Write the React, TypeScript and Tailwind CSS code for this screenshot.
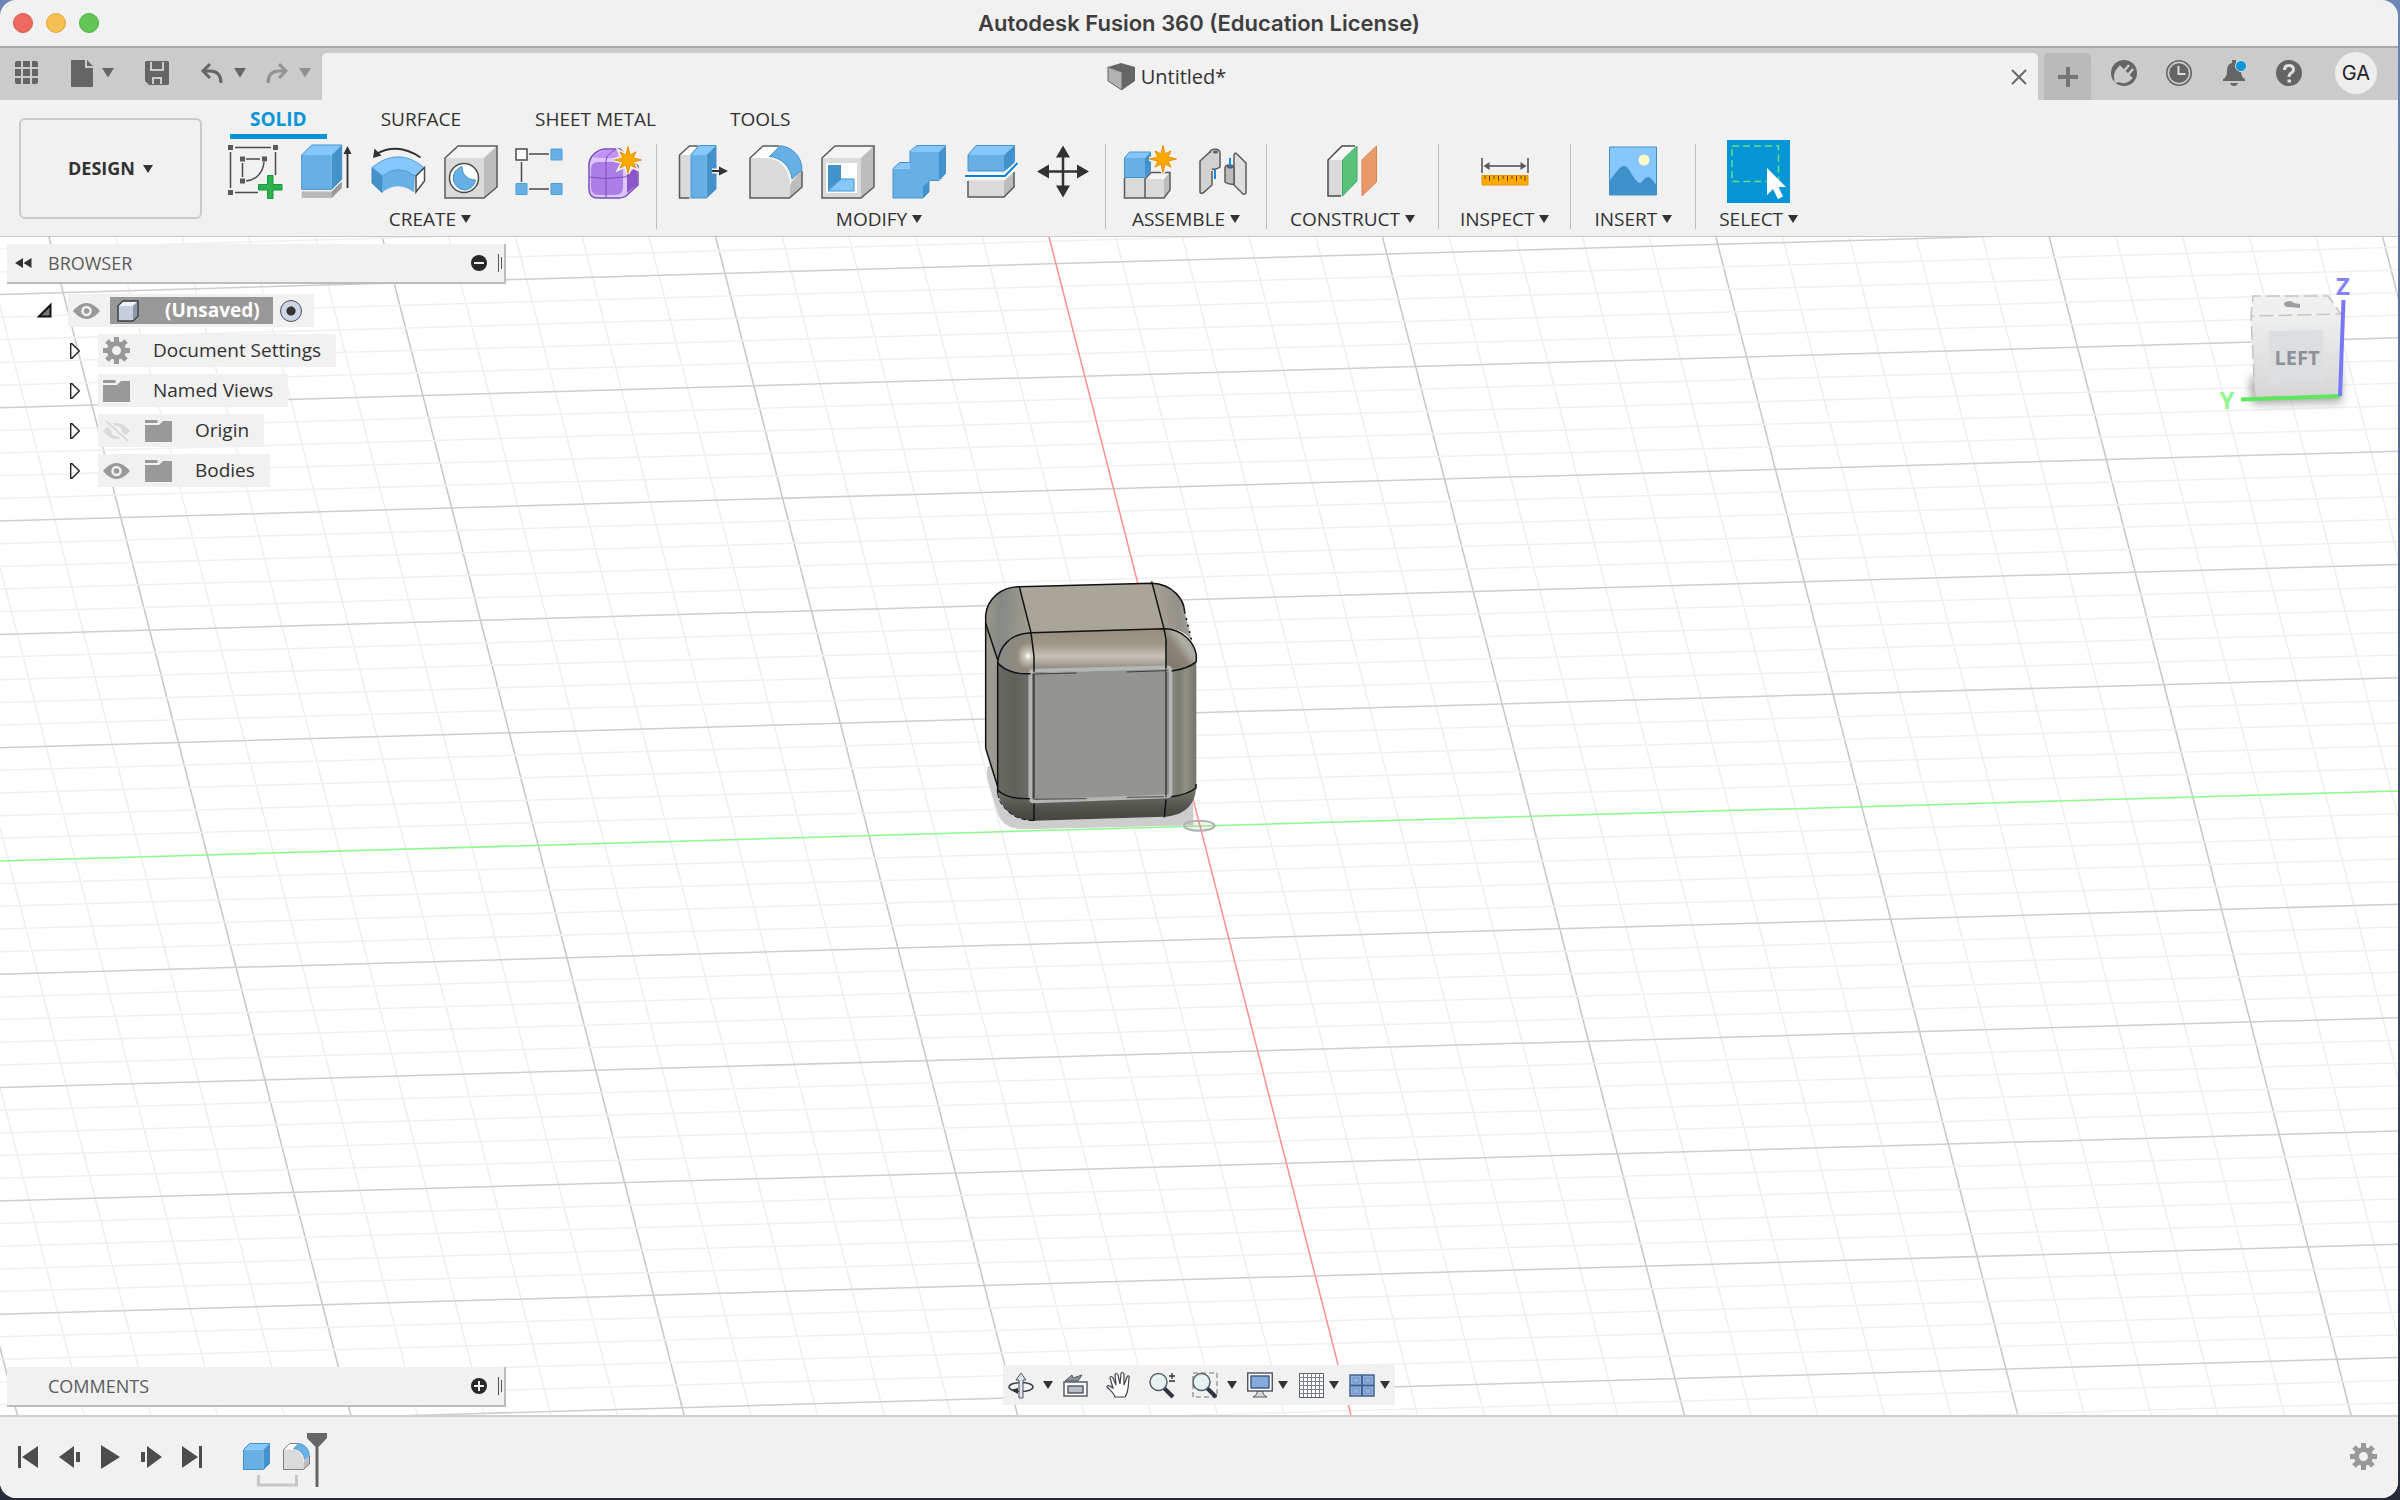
import type { ReactNode } from "react";
import clsx from "clsx";

const ribbonTabs = ["SOLID", "SURFACE", "SHEET METAL", "TOOLS"];

function Caret({ className = "w-[10px] text-[#323232]" }: { className?: string }) {
  return (
    <svg viewBox="0 0 10 8" className={clsx("shrink-0 fill-current", className)} aria-hidden="true">
      <path d="M0 0h10L5 8z" />
    </svg>
  );
}

function Icon({ w = 54, h = 54, className, children }: { w?: number; h?: number; className?: string; children: ReactNode }) {
  return (
    <svg width={w} height={h} viewBox={`0 0 ${w} ${h}`} fill="none" className={clsx("shrink-0 overflow-visible", className)} aria-hidden="true">
      {children}
    </svg>
  );
}

function Star({ x, y }: { x: number; y: number }) {
  const points = Array.from({ length: 16 }, (_, i) => {
    const r = i % 2 ? 5.5 : i % 4 ? 11.5 : 13.5;
    const a = (i * Math.PI) / 8 - Math.PI / 2;
    return `${(x + r * Math.cos(a)).toFixed(1)},${(y + r * Math.sin(a)).toFixed(1)}`;
  }).join(" ");
  return (
    <>
      <polygon points={points} stroke="#f2f2f2" strokeWidth="4" />
      <polygon points={points} fill="#ffa800" stroke="#e69200" />
    </>
  );
}

/* Ribbon icons */

function SketchIcon() {
  return (
    <Icon>
      <path d="M7 2.5h36M2.5 7v36M47.5 7v23M7 47.5h23M18 14h14M14.5 18v14M36 17C35 28 28 35 18 36" stroke="#4b4b4b" strokeWidth="1.5" />
      <path d="M0 0h5v5H0zM45 0h5v5h-5zM0 45h5v5H0zM12 11.5h5v5h-5zM34 11.5h5v5h-5zM12 33.5h5v5h-5z" fill="#5a5a5a" />
      <path d="M39.5 30.5h5.5v9h9v5.5h-9v8.500h-5.500v-8.500h-9v-5.500h9z" fill="#2bb24f" stroke="#149a3b" />
    </Icon>
  );
}

function ExtrudeIcon() {
  return (
    <Icon>
      <path d="M1.7 46.5h30l10-10v6.5l-10 10h-30z" fill="#b9b9b9" />
      <path d="M31.7 46.5l10-10v6.5l-10 10z" fill="#9a9a9a" />
      <path d="M1.7 10h30v34.3h-30z" fill="#67b0e6" />
      <path d="M1.7 10l10-10h30l-10 10z" fill="#86c8fb" />
      <path d="M31.7 10l10-10v34.3l-10 10z" fill="#4492cb" />
      <path d="M1.7 10l10-10h30v34.3l-10 10h-30z" stroke="#4492cb" />
      <path d="M47.5 43V5" stroke="#323232" strokeWidth="1.8" />
      <path d="M47.5 1l4 8h-8z" fill="#323232" />
    </Icon>
  );
}

function RevolveIcon() {
  return (
    <Icon>
      <path d="M0 22.5L10.5 31 10 47.5 0 38z" fill="#4492cb" stroke="#3b88c2" />
      <path d="M10.5 31Q26 18 43 31L42 47.5Q26 35 10 47.5z" fill="#67b0e6" />
      <path d="M0 22.5Q26 1 52 22.5L43 31Q26 18 10.5 31z" fill="#86c8fb" stroke="#4fa0dc" />
      <path d="M44 31l8.5-8.500V36L44 47z" fill="#fff" stroke="#4b4b4b" strokeWidth="1.5" />
      <path d="M4 9Q26-3 48.5 12.5" stroke="#323232" strokeWidth="1.8" />
      <path d="M1 13l1.500-9.500 7 7z" fill="#323232" />
    </Icon>
  );
}

function BoxShell() {
  return (
    <>
      <path d="M1 13L14 1h39L40 13z" fill="#f4f4f4" />
      <path d="M40 13L53 1v41L40 53z" fill="#bdbdbd" />
      <path d="M1 13h39v40H1z" fill="#dadada" />
      <path d="M1 13L14 1h39v41L40 53H1z" stroke="#5a5a5a" strokeWidth="1.5" />
    </>
  );
}

function HoleIcon() {
  return (
    <Icon>
      <BoxShell />
      <circle cx="20" cy="33" r="14.5" fill="#fff" stroke="#4b4b4b" strokeWidth="1.5" />
      <path d="M18 21.5C18 30 24 35 31.5 35C30 42 25 45 20 45A12 12 0 0 1 18 21.5z" fill="#67b0e6" stroke="#4492cb" />
    </Icon>
  );
}

function PatternIcon() {
  return (
    <Icon>
      <path d="M13 9h20M13 44h20M5.5 17v20" stroke="#4b4b4b" strokeWidth="1.5" />
      <path d="M0 4h11v11H0z" fill="#fff" stroke="#4b4b4b" strokeWidth="1.5" />
      <path d="M35 4h11v11H35zM0 38.5h11v11H0zM35 38.5h11v11H35z" fill="#67b0e6" stroke="#4c9fd9" />
    </Icon>
  );
}

function FormIcon() {
  return (
    <Icon>
      <path d="M1 20C1 11 10 4 18 4h14l18 17v19L38 51q-3 2-7 2H10Q1 53 1 44z" fill="#dcc6fa" stroke="#7a4db8" strokeWidth="1.5" />
      <path d="M5 12Q12 5 18 5h14l-3 8H9z" fill="#c293f5" />
      <path d="M3 24q0-7 7-7h17q8 0 8 7v18q0 8-8 8H11q-8 0-8-8z" fill="#ab7de6" />
      <path d="M39 30l10-9v19l-10 8z" fill="#8c55c9" />
      <path d="M1 32q17 3 36 0l13-8M18 53V16q0-6 9-11" stroke="#7a4db8" />
      <Star x={40} y={15} />
    </Icon>
  );
}

function PressPullIcon() {
  return (
    <Icon>
      <path d="M2.5 10L12.5 1H21l-8 9v43H2.5z" fill="#dadada" />
      <path d="M3.5 10L13 1h7l-8 9z" fill="#fff" />
      <path d="M21 1h-8.500L2.5 10v43h10" stroke="#5a5a5a" strokeWidth="1.5" />
      <path d="M14 10h15.5v43H14z" fill="#67b0e6" />
      <path d="M14 10L22 .5h17L29.5 10z" fill="#86c8fb" />
      <path d="M29.5 10L39 .5V44l-9.500 9z" fill="#4492cb" />
      <path d="M14 10L22 .5h17V44l-9.500 9H14z" stroke="#4492cb" />
      <path d="M35 26h8" stroke="#f2f2f2" strokeWidth="5" />
      <path d="M35 26h10" stroke="#323232" strokeWidth="2" />
      <path d="M42 21.5l9 4.5-9 4.5z" fill="#323232" />
    </Icon>
  );
}

function FilletIcon({ size = 54 }: { size?: number }) {
  return (
    <svg width={size} height={size} viewBox="0 0 54 54" fill="none" className="shrink-0" aria-hidden="true">
      <path d="M1 13L14 1h17l-9 12z" fill="#fff" />
      <path d="M43 36l10-10v16L40.5 53V42z" fill="#bdbdbd" />
      <path d="M1 13h14c16 0 26 12 26 29v11H1z" fill="#dadada" />
      <path d="M30 1H14L1 13v40h39.5L53 42V26" stroke="#5a5a5a" strokeWidth="1.5" />
      <path d="M31 .7C44 2 53 12 53 25L43 34C42 22 32 12 20.5 11.5z" fill="#67b0e6" stroke="#4492cb" />
    </svg>
  );
}

function ShellIcon() {
  return (
    <Icon>
      <BoxShell />
      <path d="M5 18h31v30H5z" fill="#fff" />
      <path d="M7 20h13v14L7 46z" fill="#4492cb" />
      <path d="M7 46l13-12h13v12z" fill="#86c8fb" stroke="#4492cb" />
    </Icon>
  );
}

function CombineIcon() {
  return (
    <Icon>
      <path d="M0 23.5h17V6h29v29.5L36 36l-6 5v12H0z" fill="#67b0e6" />
      <path d="M0 23.5l6.5-6H17v6zM17 7l7-6.5h28.5L46 7z" fill="#86c8fb" />
      <path d="M46 7l6.5-6.5v28L46 35.5zM30 41l6-5v11l-6 6z" fill="#4492cb" />
      <path d="M0 23.5l6.5-6H17V6L24 .5h28.5v28L46 35.5H36V47l-6 6H0z" stroke="#4492cb" />
    </Icon>
  );
}

function SplitIcon() {
  return (
    <Icon>
      <path d="M3 35.5h36V52H3z" fill="#dadada" />
      <path d="M39 36l10-9v15L39 52z" fill="#bdbdbd" />
      <path d="M3 36v16h36l10-10V27" stroke="#5a5a5a" strokeWidth="1.5" />
      <path d="M3 10h36v16H3z" fill="#67b0e6" />
      <path d="M3 10l8-9.500h38.500L39 10z" fill="#86c8fb" />
      <path d="M39 10L49.5.5V18L39 26z" fill="#4492cb" />
      <path d="M3 10l8-9.500h38.500V18L39 26H3z" stroke="#4492cb" />
      <path d="M0 31h40l12.5-13" stroke="#fff" strokeWidth="5" />
      <path d="M0 31h40l12.5-13" stroke="#0c7fd6" strokeWidth="2" />
    </Icon>
  );
}

function MoveIcon() {
  return (
    <Icon>
      <path d="M26 10v33M9 26.5h34" stroke="#323232" strokeWidth="2.5" />
      <path d="M26 .5l7 12H19zM26 52.5l7-12H19zM0 26.5l12-7v14zM52 26.5l-12-7v14z" fill="#323232" />
    </Icon>
  );
}

function ComponentIcon() {
  return (
    <Icon>
      <path d="M1.5 33h20.5v20H1.5zM22 34h19v19H22z" fill="#dadada" />
      <path d="M22 34l6-6.5h19L41 34z" fill="#f4f4f4" />
      <path d="M41 34l6-6.5V45l-6 8z" fill="#bdbdbd" />
      <path d="M1.5 33v20H41l6-8V27.5H28L22 34v19" stroke="#5a5a5a" strokeWidth="1.5" />
      <path d="M1.5 13H22v19.5H1.5z" fill="#67b0e6" />
      <path d="M1.5 13l5-6h21L22 13z" fill="#86c8fb" />
      <path d="M22 13l5.5-6v20L22 32.5z" fill="#4492cb" />
      <path d="M1.5 13l5-6h21v20L22 32.5H1.5z" stroke="#4492cb" />
      <Star x={40} y={14} />
    </Icon>
  );
}

function JointIcon() {
  return (
    <Icon>
      <path d="M5 16L15 5q8 5 11 18l-9 3v14L8 48q-3 1-3-1z" fill="#d2d2d2" />
      <path d="M17 26v14L8 48q-3 1-3-1V16L16 6" stroke="#5a5a5a" strokeWidth="1.5" />
      <path d="M15 8c0-5 10-5 10 0v14q-4 3-8 2" fill="#d2d2d2" stroke="#5a5a5a" strokeWidth="1.5" />
      <ellipse cx="20.5" cy="7" rx="2.5" ry="1.5" fill="#5a5a5a" />
      <path d="M39 10q1-3 3-1l9 9v30q-1 2-3 1l-9-9z" fill="#dedede" stroke="#5a5a5a" strokeWidth="1.5" />
      <path d="M30 23c0-4 9-4 9 0v16q-5 1-9-2z" fill="#bcbcbc" stroke="#5a5a5a" strokeWidth="1.5" />
      <ellipse cx="35" cy="22" rx="3" ry="1.5" fill="#5a5a5a" />
      <path d="M20 25v9M35 13v9" stroke="#0c8bea" strokeWidth="2" />
    </Icon>
  );
}

function ConstructIcon() {
  return (
    <Icon w={50}>
      <path d="M1 15L15 1h14L15 15v36H1z" fill="#dadada" />
      <path d="M1 15L15 1h14L15 15z" fill="#f6f6f6" />
      <path d="M28 1H15L1 15v36h13" stroke="#4b4b4b" strokeWidth="1.5" />
      <path d="M15.5 15L30 1v35L15.5 51z" fill="#58c27b" stroke="#3bab62" />
      <path d="M35 15L49.5 1v36L35 51z" fill="#e89a68" stroke="#d6834e" />
    </Icon>
  );
}

function MeasureIcon() {
  return (
    <Icon w={48}>
      <path d="M1 13v15M47 13v15M6 21h36" stroke="#4b4b4b" strokeWidth="1.5" />
      <path d="M2.5 21l6-4v8zM45.5 21l-6-4v8z" fill="#5a5a5a" />
      <path d="M1 30.5h46v9.500H1z" fill="#ffa800" stroke="#e69200" />
      <path d="M4 31v3M8.5 31v5M13 31v3M17.5 31v5M22 31v3M26.5 31v5M31 31v3M35.5 31v5M40 31v3M44 31v5" stroke="#5a4a20" />
    </Icon>
  );
}

function CanvasIcon() {
  return (
    <Icon w={48}>
      <path d="M.5 2h47v48H.5z" fill="#86c8fb" />
      <path d="M.5 36C8 26 11 21 15 21c6 0 9 15 16 17 3-1 4-6 8-6 3 0 5 4 8.5 8v10H.5z" fill="#3e90cb" />
      <circle cx="35" cy="15" r="5.5" fill="#fffcc9" />
      <path d="M.5 2h47v48H.5z" stroke="#3e90cb" />
    </Icon>
  );
}

function SelectIcon() {
  return (
    <Icon w={63} h={63} className="bg-[#0696d7]">
      <path d="M5 6h46.5v35.5H5z" stroke="#65e07b" strokeWidth="1.5" strokeDasharray="7 4" />
      <path d="M40 28v27l6-6 5 10 5-2.5-4.500-9.500H59z" fill="#fff" />
    </Icon>
  );
}

const panels: { label: string; pad: string; labelPad?: string; tools: { name: string; icon: ReactNode }[] }[] = [
  {
    label: "CREATE",
    pad: "pl-[26px] pr-[14px]",
    labelPad: "pr-[10px]",
    tools: [
      { name: "Create Sketch", icon: <SketchIcon /> },
      { name: "Extrude", icon: <ExtrudeIcon /> },
      { name: "Revolve", icon: <RevolveIcon /> },
      { name: "Hole", icon: <HoleIcon /> },
      { name: "Rectangular Pattern", icon: <PatternIcon /> },
      { name: "Create Form", icon: <FormIcon /> },
    ],
  },
  {
    label: "MODIFY",
    pad: "pl-[20px] pr-[14px]",
    labelPad: "pr-[10px]",
    tools: [
      { name: "Press Pull", icon: <PressPullIcon /> },
      { name: "Fillet", icon: <FilletIcon /> },
      { name: "Shell", icon: <ShellIcon /> },
      { name: "Combine", icon: <CombineIcon /> },
      { name: "Split Body", icon: <SplitIcon /> },
      { name: "Move", icon: <MoveIcon /> },
    ],
  },
  {
    label: "ASSEMBLE",
    pad: "px-[17px]",
    tools: [
      { name: "New Component", icon: <ComponentIcon /> },
      { name: "Joint", icon: <JointIcon /> },
    ],
  },
  { label: "CONSTRUCT", pad: "px-[23px]", tools: [{ name: "Offset Plane", icon: <ConstructIcon /> }] },
  { label: "INSPECT", pad: "px-[21px]", tools: [{ name: "Measure", icon: <MeasureIcon /> }] },
  { label: "INSERT", pad: "px-[23px]", tools: [{ name: "Canvas", icon: <CanvasIcon /> }] },
  { label: "SELECT", pad: "px-[23px]", tools: [{ name: "Select", icon: <SelectIcon /> }] },
];

function TitleBar() {
  return (
    <header className="relative flex h-[48px] shrink-0 items-center justify-center border-b-2 border-[#a9a9a9]">
      <div className="absolute left-[13px] flex gap-[13px]">
        <button type="button" aria-label="Close" className="size-[20px] rounded-full border border-[#d9574c] bg-[#ed6a5e]" />
        <button type="button" aria-label="Minimize" className="size-[20px] rounded-full border border-[#dca73c] bg-[#f5bf4f]" />
        <button type="button" aria-label="Zoom" className="size-[20px] rounded-full border border-[#4fae40] bg-[#61c654]" />
      </div>
      <h1 className="font-['Inter',sans-serif] text-[22px] font-semibold text-[#3e3e3e]">Autodesk Fusion 360 (Education License)</h1>
    </header>
  );
}

function TabBar() {
  return (
    <div className="flex h-[52px] shrink-0 bg-[#cbcbcb] text-[#656565]">
      <div className="flex w-[322px] shrink-0 items-center pb-[2px] pl-[15px]">
        <button type="button" aria-label="Data panel">
          <Icon w={24} h={24}>
            <path d="M0 2q0-2 2-2h4v6H0zM8 0h7v6H8zM17 0h4q2 0 2 2v4h-6zM0 8h6v7H0zM8 8h7v7H8zM17 8h6v7h-6zM0 17h6v6H2q-2 0-2-2zM8 17h7v6H8zM17 17h6v4q0 2-2 2h-4z" fill="currentColor" />
          </Icon>
        </button>
        <button type="button" aria-label="File" className="ml-8 flex items-center gap-[9px]">
          <Icon w={22} h={27}>
            <path d="M1 0h13v8h8v18q0 1-1 1H1q-1 0-1-1V1q0-1 1-1zM16 0l6 6h-6z" fill="currentColor" />
          </Icon>
          <Caret className="w-[12px]" />
        </button>
        <button type="button" aria-label="Save" className="ml-[31px]">
          <Icon w={24} h={24}>
            <path fillRule="evenodd" d="M0 1.5Q0 0 1.5 0h21Q24 0 24 1.5v21q0 1.5-1.5 1.5H4l-4-4zM5 1v9h14V1h-2v7H7V1zM7 23h2v-5h6v5h2v-7H7z" fill="currentColor" />
          </Icon>
        </button>
        <button type="button" aria-label="Undo" className="ml-8 flex items-center gap-[11px]">
          <Icon w={22} h={22}>
            <path d="M9 2L2 9l7 7M2 9h7q11 0 11 12" stroke="currentColor" strokeWidth="3" />
          </Icon>
          <Caret className="w-[12px]" />
        </button>
        <button type="button" aria-label="Redo" className="ml-[20px] flex items-center gap-[11px] text-[#929292]">
          <Icon w={22} h={22}>
            <path d="M13 2l7 7-7 7M20 9h-7Q2 9 2 21" stroke="currentColor" strokeWidth="3" />
          </Icon>
          <Caret className="w-[12px]" />
        </button>
      </div>
      <div className="mt-[5px] flex flex-1 items-center rounded-t-[5px] bg-[#f1f1f1] pr-3">
        <div className="flex flex-1 items-center justify-center gap-[6px]">
          <Icon w={27} h={27}>
            <path d="M0 4l13-4 14 4v14L14 27 0 18z" fill="#666" />
            <path d="M0 4l14 5v18L0 18z" fill="#b3b3b3" stroke="#666" />
          </Icon>
          <span className="text-[20px] text-[#323232]">Untitled*</span>
        </div>
        <button type="button" aria-label="Close document">
          <Icon w={14} h={14}>
            <path d="M0 0l14 14M14 0L0 14" stroke="#6b6b6b" strokeWidth="2" />
          </Icon>
        </button>
      </div>
      <button type="button" aria-label="New design" className="mt-[5px] ml-[6px] flex w-[47px] items-center justify-center rounded-t-[5px] bg-[#bababa]">
        <Icon w={20} h={20}>
          <path d="M10 0v20M0 10h20" stroke="#757575" strokeWidth="4" />
        </Icon>
      </button>
      <div className="flex items-center gap-[29px] pr-[21px] pb-[2px] pl-[20px]">
        <button type="button" aria-label="Extensions">
          <Icon w={26} h={26}>
            <circle cx="13" cy="13" r="13" fill="currentColor" />
            <path d="M5 21C3 16 5 11 9 7l11 11C16 22 12 23 8 21zM13 11l5-6M17 15l5-6" fill="#cbcbcb" stroke="#cbcbcb" strokeWidth="2.500" />
            <path d="M4 22l3-2" stroke="#cbcbcb" strokeWidth="3" />
          </Icon>
        </button>
        <button type="button" aria-label="Job status">
          <Icon w={26} h={26}>
            <circle cx="13" cy="13" r="12.2" stroke="currentColor" strokeWidth="1.6" />
            <circle cx="13" cy="13" r="9.8" fill="currentColor" />
            <path d="M12.5 6v8h7" stroke="#dedede" strokeWidth="2" />
          </Icon>
        </button>
        <button type="button" aria-label="Notifications">
          <Icon w={26} h={26}>
            <path d="M11 0h4v3c5 1 5 6 5 10q1 5 4 6v2H2v-2q3-1 4-6c0-4 0-9 5-10zM9 23h8q-1 3-4 3t-4-3z" fill="currentColor" />
            <circle cx="20" cy="6" r="5.5" fill="#0696d7" stroke="#dedede" />
          </Icon>
        </button>
        <button type="button" aria-label="Help">
          <Icon w={26} h={26}>
            <circle cx="13" cy="13" r="13" fill="currentColor" />
            <path d="M8.5 10q0-4.500 4.500-4.500t4.500 4q0 2.500-3 4-1.500 1-1.500 3.500" stroke="#dedede" strokeWidth="3" />
            <path d="M11.5 19.5h3.500v3h-3.500z" fill="#dedede" />
          </Icon>
        </button>
        <button type="button" aria-label="Account" className="ml-1 flex size-[42px] items-center justify-center rounded-full bg-[#eee] font-['Inter',sans-serif] text-[20px] text-[#222]">
          GA
        </button>
      </div>
    </div>
  );
}

function Ribbon() {
  return (
    <div className="flex h-[137px] shrink-0 border-b border-[#c9c9c9] text-[19px] text-[#323232]">
      <button type="button" aria-haspopup="menu" className="mt-[18px] ml-[19px] flex h-[101px] w-[183px] shrink-0 items-center justify-center gap-2 rounded-[6px] border-2 border-[#cacaca] text-[18px] font-bold">
        DESIGN <Caret />
      </button>
      <div className="flex flex-col">
        <nav className="flex h-[40px] gap-[34px] pl-[28px]" role="tablist">
          {ribbonTabs.map((tab, i) => (
            <button
              key={tab}
              type="button"
              role="tab"
              aria-selected={i === 0}
              className={clsx(
                "h-[39px] border-b-5 px-5 pt-[3px] leading-[28px]",
                i === 0 ? "border-[#0696d7] font-bold text-[#0696d7]" : "border-transparent",
              )}
            >
              {tab}
            </button>
          ))}
        </nav>
        <div className="flex">
          {panels.map((panel, i) => (
            <section key={panel.label} aria-label={panel.label} className="flex">
              {i > 0 && <span className="mt-1 h-[85px] w-px bg-[#bdbdbd]" />}
              <div className={clsx("flex flex-col items-center", panel.pad)}>
                <div className="flex h-[63px] items-center gap-[18px]">
                  {panel.tools.map((tool) => (
                    <button key={tool.name} type="button" aria-label={tool.name}>
                      {tool.icon}
                    </button>
                  ))}
                </div>
                <button type="button" aria-haspopup="menu" className={clsx("flex items-center gap-[5px] pt-[2px] leading-[28px]", panel.labelPad)}>
                  {panel.label} <Caret />
                </button>
              </div>
            </section>
          ))}
        </div>
      </div>
    </div>
  );
}

/* Model canvas */

const ORIGIN = { x: 1200, y: 826 };
const X_STEP = 66.68;
const Y_STEP = 22.66;

// minor lines come first so that the major ones are painted over them
const gridSteps = (limit: number) =>
  Array.from({ length: limit * 2 + 1 }, (_, i) => i - limit)
    .filter((k) => k !== 0)
    .sort((a, b) => Number(a % 5 === 0) - Number(b % 5 === 0));

function Grid() {
  return (
    <g strokeWidth="1.5">
      {gridSteps(22).map((k) => {
        const x = ORIGIN.x + k * X_STEP;
        return <line key={k} x1={x - 154} y1={225} x2={x + 154} y2={1427} stroke={k % 5 === 0 ? "#c6c6c6" : "#eeeeee"} />;
      })}
      {gridSteps(29).map((k) => {
        const y = ORIGIN.y + k * Y_STEP;
        return <line key={k} x1={0} y1={y + 35} x2={2400} y2={y - 35} stroke={k % 5 === 0 ? "#cecece" : "#f0f0f0"} />;
      })}
      <line x1={0} y1={861} x2={2400} y2={791} stroke="#8cfb8c" />
      <line x1={1046} y1={225} x2={1354} y2={1427} stroke="#ff8f8f" />
    </g>
  );
}

function Body() {
  return (
    <g transform="translate(960 560) scale(0.3333)">
      <defs>
        <linearGradient id="edge-top" x1="0" y1="0" x2="0" y2="1">
          <stop offset="0" stopColor="#958d7e" />
          <stop offset=".35" stopColor="#a19887" />
          <stop offset=".62" stopColor="#c6c1b7" />
          <stop offset=".8" stopColor="#a39e93" />
          <stop offset="1" stopColor="#77756c" />
        </linearGradient>
        <linearGradient id="edge-left" x1="0" y1="0" x2="1" y2="0">
          <stop offset="0" stopColor="#686961" />
          <stop offset=".5" stopColor="#5f6059" />
          <stop offset="1" stopColor="#73746e" />
        </linearGradient>
        <linearGradient id="edge-right" x1="0" y1="0" x2="1" y2="0">
          <stop offset="0" stopColor="#8b8c86" />
          <stop offset=".45" stopColor="#7c7d73" />
          <stop offset=".65" stopColor="#919186" />
          <stop offset="1" stopColor="#74746a" />
        </linearGradient>
        <linearGradient id="edge-bottom" x1="0" y1="0" x2="0" y2="1">
          <stop offset="0" stopColor="#77776f" />
          <stop offset=".6" stopColor="#53534d" />
          <stop offset="1" stopColor="#45453f" />
        </linearGradient>
        <linearGradient id="edge-side" x1="0" y1="0" x2="1" y2=".1">
          <stop offset="0" stopColor="#a19b8c" />
          <stop offset=".35" stopColor="#858984" />
          <stop offset=".6" stopColor="#8f918a" />
          <stop offset="1" stopColor="#a29d90" />
        </linearGradient>
        <linearGradient id="edge-far" x1="0" y1=".2" x2="1" y2="0">
          <stop offset="0" stopColor="#aaa497" />
          <stop offset=".6" stopColor="#94918a" />
          <stop offset="1" stopColor="#b3b3ac" />
        </linearGradient>
        <radialGradient id="corner-left" cx=".84" cy=".57" r=".8">
          <stop offset="0" stopColor="#fff" />
          <stop offset=".12" stopColor="#cfcabf" />
          <stop offset=".4" stopColor="#8f8a7d" />
          <stop offset="1" stopColor="#858985" />
        </radialGradient>
        <linearGradient id="corner-right" x1="0" y1="1" x2="1" y2="0">
          <stop offset="0" stopColor="#77746a" />
          <stop offset=".45" stopColor="#8b8578" />
          <stop offset=".65" stopColor="#b0b0aa" />
          <stop offset="1" stopColor="#8b867a" />
        </linearGradient>
      </defs>
      <path d="M82 620L80 650 113 760Q130 810 200 808L700 796V720L120 600z" fill="#cdcdcd" />
      <ellipse cx="718" cy="797" rx="46" ry="15" fill="#999" fillOpacity=".15" stroke="#aeb2ae" strokeWidth="6" />
      <path d="M77 170L113 290V680L77 565z" fill="#9d9b90" />
      <path d="M77 190V165C82 115 125 80 178 80L214 218C150 220 118 260 113 300z" fill="url(#edge-side)" />
      <path d="M178 80L575 70 612 206 213 218z" fill="#a9a598" />
      <path d="M575 70C640 72 672 120 674 155L696 245C680 215 650 205 612 206z" fill="url(#edge-far)" />
      <path d="M213 218L612 206 620 325 222 340z" fill="url(#edge-top)" />
      <path d="M213 218C150 222 118 260 113 308C135 335 180 344 222 340z" fill="url(#corner-left)" />
      <path d="M612 206C670 206 704 250 709 285V305C690 322 660 332 620 335z" fill="url(#corner-right)" />
      <path d="M113 305C135 335 180 344 222 340V720C180 720 135 712 113 690z" fill="url(#edge-left)" />
      <path d="M618 335C660 332 690 322 709 303V685C690 700 660 710 618 714z" fill="url(#edge-right)" />
      <path d="M113 690C135 712 180 720 222 720L618 712C660 710 690 700 708 684C706 740 665 768 613 770L220 782C160 780 118 745 113 690z" fill="url(#edge-bottom)" />
      <path d="M222 340L618 325V712L222 720z" fill="#949590" />
      <path d="M220 332L622 322Q632 322 632 332V700Q632 708 622 709L222 724Q211 725 211 714V342Q211 332 220 332z" fill="none" stroke="#b4b6b4" strokeWidth="11" />
      <g fill="none" stroke="#111" strokeWidth="4.5">
        <path d="M77 565V165C82 115 125 80 178 80L575 70C640 72 672 120 674 155" />
        <path d="M674 155L696 245" strokeDasharray="6 14" />
        <path d="M77 190L113 300M77 565L113 680M178 80L213 218M575 64L612 206" />
        <path d="M113 700V308C118 260 150 220 213 218L612 206C670 206 704 250 709 285V305" />
        <path d="M213 218L222 290V335M612 206L618 240V325M113 308C135 335 180 344 212 341M635 333C665 329 690 322 709 305" />
        <path d="M222 340V715M618 325V712" strokeWidth="3" />
        <path d="M225 342L350 339M500 336L618 332M222 718L380 716M500 712L612 710" strokeWidth="2" />
        <path d="M222 730V783M618 718L613 772M113 690C135 712 165 718 210 716M635 710C665 706 690 698 708 684V672" />
        <path d="M113 700Q118 730 135 745Q165 780 220 782" strokeDasharray="14 8" strokeWidth="3" />
      </g>
    </g>
  );
}

function ViewCube() {
  return (
    <svg viewBox="2210 270 150 150" className="absolute top-[33px] right-[38px] size-[150px]" role="img" aria-label="View cube">
      <defs>
        <filter id="soft" x="-30%" y="-30%" width="160%" height="160%">
          <feGaussianBlur stdDeviation="5" />
        </filter>
        <linearGradient id="cube-front" x1="0" y1="0" x2="0" y2="1">
          <stop offset="0" stopColor="#efefef" />
          <stop offset="1" stopColor="#d6d6d6" />
        </linearGradient>
      </defs>
      <path d="M2250 378L2340 360 2342 402 2252 404z" fill="#a6a6a6" filter="url(#soft)" />
      <path d="M2253 296H2328L2341 314 2251 316z" fill="#f0f0f0" />
      <path d="M2251 316L2341 314 2339 396 2255 397z" fill="url(#cube-front)" />
      <path d="M2269 331L2323 330V382L2270 383z" fill="#dcdfe2" />
      <path d="M2255 397L2251 316 2253 296H2328L2341 314 2251 316" fill="none" stroke="#c4c4c4" strokeWidth="1.5" strokeDasharray="14 5" />
      <path d="M2284 303q6-4 10 0l6 1v4l-10-1q-6 1-6-4z" fill="#9a9da1" />
      <text x="2297" y="365" textAnchor="middle" className="fill-[#8d9197] font-['Open_Sans',sans-serif] text-[20px] font-bold">LEFT</text>
      <path d="M2241 399.5L2340 396" stroke="#5fe65f" strokeWidth="4" />
      <path d="M2343.5 300L2340 396" stroke="#7878f5" strokeWidth="4" />
      <text x="2343" y="295" textAnchor="middle" className="fill-[#8484ff] font-['Open_Sans',sans-serif] text-[24px] font-bold">Z</text>
      <text x="2227" y="409" textAnchor="middle" className="fill-[#92f992] font-['Open_Sans',sans-serif] text-[24px] font-bold">Y</text>
    </svg>
  );
}

/* Browser tree */

function Eye({ off = false }: { off?: boolean }) {
  return (
    <Icon w={27} h={20} className={off ? "text-[#dadada]" : "text-[#999]"}>
      <path d="M0 10Q13.5-6 27 10Q13.5 26 0 10z" fill="currentColor" />
      <circle cx="13.5" cy="10" r="4" stroke="#f1f1f1" strokeWidth="2.500" />
      {off && <path d="M2 0l23 20" stroke="#f1f1f1" strokeWidth="6" />}
      {off && <path d="M3 0l22 20" stroke="currentColor" strokeWidth="2" />}
    </Icon>
  );
}

function Folder() {
  return (
    <Icon w={27} h={22}>
      <path d="M0 0h12l1 1.5-1 1.5H0zM0 5h14l4-4h9v21H0z" fill="#999" />
    </Icon>
  );
}

function Gear() {
  return (
    <Icon w={27} h={27}>
      <circle cx="13.5" cy="13.5" r="7" stroke="#999" strokeWidth="5" />
      <path d="M13.5 0v5M13.5 22v5M0 13.5h5M22 13.5h5M4 4l4 4M19 19l4 4M23 4l-4 4M8 19l-4 4" stroke="#999" strokeWidth="5" />
    </Icon>
  );
}

const treeRows = [
  { label: "Document Settings", icon: <Gear /> },
  { label: "Named Views", icon: <Folder /> },
  { label: "Origin", eye: "off", icon: <Folder /> },
  { label: "Bodies", eye: "on", icon: <Folder /> },
];

function PanelHeader({ title, open }: { title: string; open: boolean }) {
  return (
    <div className="flex h-[40px] items-center border-r-2 border-b-2 border-[#bdbdbd] bg-[#f1f1f1] pr-[2px] pl-2 text-[18px] text-[#5c5c5c]">
      <span className="w-[33px]">
        {open && (
          <button type="button" aria-label="Collapse browser" className="block">
            <Icon w={17} h={10}>
              <path d="M0 5l8-5v10zM8.500 5l8-5v10z" fill="#323232" />
            </Icon>
          </button>
        )}
      </span>
      <h2 className="flex-1">{title}</h2>
      <button type="button" aria-label={open ? "Hide" : "Show"}>
        <Icon w={16} h={16}>
          <circle cx="8" cy="8" r="8" fill="#282828" />
          <path d={open ? "M3 8h10" : "M3 8h10M8 3v10"} stroke="#f1f1f1" strokeWidth="2" />
        </Icon>
      </button>
      <span className="ml-[11px] flex items-center gap-[2px]">
        <span className="h-[18px] w-px bg-[#555]" />
        <span className="h-[12px] w-px bg-[#555]" />
      </span>
    </div>
  );
}

function Browser() {
  return (
    <aside className="absolute top-[7px] left-[7px] w-[499px] text-[#323232]">
      <PanelHeader title="BROWSER" open />
      <ul className="mt-[10px] flex flex-col gap-[7px] text-[19px]">
        <li className="flex h-[33px] items-center pl-8">
          <button type="button" aria-label="Collapse (Unsaved)">
            <Icon w={12} h={12}>
              <path d="M0 11.5L11.5 0v11.5z" fill="#777" stroke="#111" strokeWidth="2" />
            </Icon>
          </button>
          <div className="ml-[17px] flex h-full items-center bg-[#f1f1f1] pr-[12px] pl-[5px]">
            <Eye />
            <div className="ml-[10px] flex h-[27px] items-center bg-[#989898] pr-[13px] pl-[7px] font-bold text-white">
              <Icon w={22} h={22}>
                <path d="M1 6l5-5h15v15l-5 5H1z" fill="#c5cede" stroke="#3a3f47" strokeWidth="1.5" />
                <path d="M2 6l4-4h14l-4 4z" fill="#eef2f9" />
                <path d="M16 6l4-4v14l-4 4z" fill="#8b96aa" />
              </Icon>
              <label htmlFor="active-component" className="ml-[26px]">(Unsaved)</label>
            </div>
            <input
              id="active-component"
              type="radio"
              name="active"
              defaultChecked
              className="ml-[7px] size-[22px] appearance-none rounded-full border border-[#4a4f5a] bg-radial from-[#333] from-28% to-[#cdd6e6] to-36%"
            />
          </div>
        </li>
        {treeRows.map((row) => (
          <li key={row.label} className="flex h-[33px] items-center pl-[63px]">
            <button type="button" aria-label={`Expand ${row.label}`}>
              <Icon w={10} h={16}>
                <path d="M.7.7h1.3L9.3 8 2 15.3H.7z" fill="#fff" stroke="#222" strokeWidth="1.4" />
              </Icon>
            </button>
            <div className="ml-[18px] flex h-full items-center bg-[#f1f1f1] pr-[15px] pl-[5px]">
              {row.eye && (
                <span className="mr-[15px]">
                  <Eye off={row.eye === "off"} />
                </span>
              )}
              {row.icon}
              <span className="ml-[23px]">{row.label}</span>
            </div>
          </li>
        ))}
      </ul>
    </aside>
  );
}

/* Navigation bar */

const navTools: { name: string; menu?: boolean; spacing: string; icon: ReactNode }[] = [
  {
    name: "Orbit",
    menu: true,
    spacing: "gap-[9px] mr-[10px]",
    icon: (
      <>
        <ellipse cx="13" cy="15" rx="12" ry="4.500" stroke="#3b434f" strokeWidth="1.5" />
        <path d="M11 26V8H8l5-7 5 7h-3v18z" fill="#dde3ec" stroke="#4d5561" />
        <path d="M3 18l7-2v6z" fill="#323232" />
      </>
    ),
  },
  {
    name: "Look At",
    spacing: "mr-[17px]",
    icon: (
      <>
        <path d="M2 9l7-6 1 3 9-3-4 6z" fill="#8b9199" stroke="#555b64" />
        <path d="M1 10h23v14H1z" fill="#fff" stroke="#555b64" strokeWidth="1.5" />
        <path d="M5 14h15v7H5z" fill="#b8bfc9" stroke="#555b64" strokeWidth="1.5" />
      </>
    ),
  },
  {
    name: "Pan",
    spacing: "mr-[17px]",
    icon: (
      <path
        d="M9 25c-1-4-4-6-8-10 0-2 2-2 6 1L4 6c0-2 2-2 3 0l3 7-1-10c0-2 2-2 3 0l2 9 1-10c0-2 2-2 3 0v11l3-8c1-2 3-1 2 1-1 8 0 13-4 19z"
        fill="#fff"
        stroke="#3f444b"
        strokeWidth="1.2"
      />
    ),
  },
  {
    name: "Zoom",
    spacing: "mr-[17px]",
    icon: (
      <>
        <path d="M15 16l9 9" stroke="#2d3340" strokeWidth="4" />
        <circle cx="9.5" cy="10" r="8.5" fill="#e6f2f2" stroke="#59616b" strokeWidth="1.5" />
        <path d="M20 4h6M23 1v6M20 9h6" stroke="#323232" strokeWidth="1.3" />
      </>
    ),
  },
  {
    name: "Fit",
    menu: true,
    spacing: "gap-[9px] mr-[10px]",
    icon: (
      <>
        <path d="M1 1h24v24H1z" stroke="#9a9a9a" strokeWidth="1.5" strokeDasharray="5 3" />
        <path d="M15 16l9 9" stroke="#2d3340" strokeWidth="4" />
        <circle cx="9.5" cy="10" r="8.5" fill="#e6f2f2" stroke="#59616b" strokeWidth="1.5" />
      </>
    ),
  },
  {
    name: "Display Settings",
    menu: true,
    spacing: "gap-[5px] mr-[10px]",
    icon: (
      <>
        <path d="M10 19h6v3l4 3H6l4-3z" fill="#d7dbe0" stroke="#555b64" />
        <path d="M.7 1h24.6v18H.7z" fill="#fff" stroke="#555b64" strokeWidth="1.5" />
        <path d="M4 4h18v12H4z" fill="#86aadb" stroke="#3f5f8e" strokeWidth="1.5" />
      </>
    ),
  },
  {
    name: "Grid and Snaps",
    menu: true,
    spacing: "gap-[5px] mr-[10px]",
    icon: (
      <>
        <path d="M1.5 1.5h24v24h-24z" fill="#fff" stroke="#555b64" />
        <path d="M5.5 1v24M9.5 1v24M13.5 1v24M17.5 1v24M21.5 1v24M1 5.5h24M1 9.5h24M1 13.5h24M1 17.5h24M1 21.5h24" stroke="#7a818c" />
      </>
    ),
  },
  {
    name: "Viewports",
    menu: true,
    spacing: "gap-[5px]",
    icon: (
      <>
        <path d="M1 3h24v21H1z" fill="#8fb0dc" stroke="#46648f" strokeWidth="1.5" />
        <path d="M13 3v21M1 13.5h24" stroke="#46648f" strokeWidth="2" />
        <path d="M4 6h6v5H4zM16 6h6v5h-6zM4 16.5h6v5H4zM16 16.5h6v5h-6z" stroke="#6f93c4" />
      </>
    ),
  },
];

function NavigationBar() {
  return (
    <div role="toolbar" aria-label="Navigation" className="absolute bottom-[10px] left-1/2 flex h-[40px] -translate-x-1/2 items-center bg-[#f1f1f1] px-[5px]">
      {navTools.map((tool) => (
        <button key={tool.name} type="button" aria-label={tool.name} className={clsx("flex items-center", tool.spacing)}>
          <Icon w={26} h={27}>{tool.icon}</Icon>
          {tool.menu && <Caret />}
        </button>
      ))}
    </div>
  );
}

function Canvas() {
  return (
    <main className="relative min-h-0 flex-1 overflow-hidden bg-white">
      <svg viewBox="0 237 2398 1178" preserveAspectRatio="xMidYMid slice" className="size-full" role="img" aria-label="Model view">
        <Grid />
        <Body />
      </svg>
      <ViewCube />
      <Browser />
      <div className="absolute bottom-2 left-[7px] w-[499px]">
        <PanelHeader title="COMMENTS" open={false} />
      </div>
      <NavigationBar />
    </main>
  );
}

const playback = [
  { name: "Go to start", d: "M0 1h3v22H0zM20 1v22L4 12z" },
  { name: "Step back", d: "M15 1v22L0 12zM17 7h4v10h-4z" },
  { name: "Play", d: "M1 0l19 12L1 24z" },
  { name: "Step forward", d: "M0 7h4v10H0zM6 1v22l15-11z" },
  { name: "Go to end", d: "M0 1v22l16-11zM17 1h3v22h-3z" },
];

function Timeline() {
  return (
    <footer className="flex h-[83px] shrink-0 items-center border-t-2 border-[#cfcfcf] bg-[#f1f1f1] pr-[21px] pb-[2px] pl-[18px]">
      <div className="flex gap-[20px]">
        {playback.map((item) => (
          <button key={item.name} type="button" aria-label={item.name}>
            <Icon w={21} h={24}>
              <path d={item.d} fill="#4d4d4d" />
            </Icon>
          </button>
        ))}
      </div>
      <div className="relative ml-[40px] flex flex-1 items-center gap-[13px]">
        <button type="button" aria-label="Extrude feature">
          <Icon w={27} h={27}>
            <path d="M.5 6.5h20v20H.5z" fill="#67b0e6" />
            <path d="M.5 6.5l6-6h20l-6 6z" fill="#86c8fb" />
            <path d="M20.5 6.5l6-6v20l-6 6z" fill="#4492cb" />
            <path d="M.5 6.5l6-6h20v20l-6 6H.5z" stroke="#4492cb" />
          </Icon>
        </button>
        <button type="button" aria-label="Fillet feature">
          <FilletIcon size={27} />
        </button>
        <svg width="86" height="56" viewBox="0 0 86 56" className="absolute top-[-11px] left-0" fill="none" aria-hidden="true">
          <path d="M15.5 43v10h38V43" stroke="#c8c8c8" strokeWidth="3" />
          <path d="M64 1h20v5l-8.500 9v40h-3V15L64 6z" fill="#666" />
        </svg>
      </div>
      <button type="button" aria-label="Timeline settings">
        <Gear />
      </button>
    </footer>
  );
}

export default function App() {
  return (
    <div className="h-screen bg-linear-to-b from-[#6b86b5] to-[#262a3b] pr-[2px] pb-[2px] font-['Open_Sans','Noto_Sans',sans-serif]">
      <div className="flex h-full flex-col overflow-hidden rounded-[16px] bg-[#f1f1f1]">
        <TitleBar />
        <TabBar />
        <Ribbon />
        <Canvas />
        <Timeline />
      </div>
    </div>
  );
}
